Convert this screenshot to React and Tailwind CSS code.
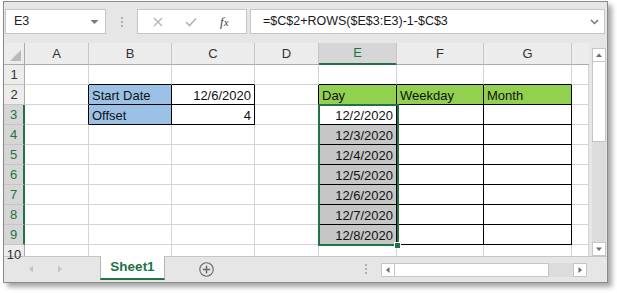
import React from "react";

const COLS = ["A", "B", "C", "D", "E", "F", "G", ""];
const ROWS = [1, 2, 3, 4, 5, 6, 7, 8, 9, 10];

const DATA = {
  B2: { v: "Start Date", bg: "bg-[#9bc2e6]" },
  C2: { v: "12/6/2020", right: true },
  B3: { v: "Offset", bg: "bg-[#9bc2e6]" },
  C3: { v: "4", right: true },
  E2: { v: "Day", bg: "bg-[#92d050]" },
  F2: { v: "Weekday", bg: "bg-[#92d050]" },
  G2: { v: "Month", bg: "bg-[#92d050]" },
  E3: { v: "12/2/2020", right: true },
  E4: { v: "12/3/2020", right: true, bg: "bg-[#c6c6c6]" },
  E5: { v: "12/4/2020", right: true, bg: "bg-[#c6c6c6]" },
  E6: { v: "12/5/2020", right: true, bg: "bg-[#c6c6c6]" },
  E7: { v: "12/6/2020", right: true, bg: "bg-[#c6c6c6]" },
  E8: { v: "12/7/2020", right: true, bg: "bg-[#c6c6c6]" },
  E9: { v: "12/8/2020", right: true, bg: "bg-[#c6c6c6]" },
};

// cells that carry a thin black outline
const inTable = (c, r) =>
  (c >= 1 && c <= 2 && r >= 2 && r <= 3) || (c >= 4 && c <= 6 && r >= 2 && r <= 9);

const Cell = ({ c, r }) => {
  const key = COLS[c] + r;
  const d = DATA[key] || {};
  const rightBlack = inTable(c, r) || inTable(c + 1, r);
  const bottomBlack = inTable(c, r) || inTable(c, r + 1);
  return (
    <div
      className={`flex items-end overflow-hidden px-[3px] pb-[1px] border-r ${
        r === 10 ? "" : "border-b"
      } ${rightBlack ? "border-r-black" : "border-r-[#d4d4d4]"} ${
        bottomBlack ? "border-b-black" : "border-b-[#d4d4d4]"
      } ${d.bg || "bg-white"} ${d.right ? "justify-end" : "justify-start"}`}
    >
      <span className="text-[13px] leading-[15px] text-[#111] whitespace-nowrap">{d.v}</span>
    </div>
  );
};

const ArrowBox = ({ dir }) => (
  <div className="w-[14px] h-[14px] border border-[#c6c6c6] bg-white flex items-center justify-center">
    <svg width="8" height="8" viewBox="0 0 8 8">
      {dir === "up" && <path d="M1 6 L4 2.5 L7 6 Z" fill="#6b6b6b" />}
      {dir === "down" && <path d="M1 2.5 L4 6 L7 2.5 Z" fill="#6b6b6b" />}
      {dir === "left" && <path d="M5.5 1 L2 4 L5.5 7 Z" fill="#6b6b6b" />}
      {dir === "right" && <path d="M2.5 1 L6 4 L2.5 7 Z" fill="#6b6b6b" />}
    </svg>
  </div>
);

export default function App() {
  const font = { fontFamily: '"Liberation Sans", Arial, sans-serif' };
  return (
    <div className="w-[617px] h-[293px] bg-white overflow-hidden" style={font}>
      <div className="ml-[3px] mt-[1px] w-[605px] h-[282px] border border-[#8a8a8a] bg-[#e6e6e6] flex flex-col shadow-[4px_4px_5px_rgba(0,0,0,0.35)]">
        {/* formula bar */}
        <div className="h-[41px] flex items-start pt-[7px] shrink-0">
          <div className="ml-[1px] w-[101px] h-[25px] bg-white border border-[#c6c6c6] flex items-center justify-between pl-[8px] pr-[6px]">
            <span className="text-[12.5px] text-[#222]">E3</span>
            <svg width="9" height="6" viewBox="0 0 9 6">
              <path d="M0.5 1 L8.5 1 L4.5 5 Z" fill="#7a7a7a" />
            </svg>
          </div>
          <div className="w-[31px] h-[25px] flex flex-col items-center justify-center gap-[2px]">
            <span className="w-[2px] h-[2px] bg-[#b0b0b0]" />
            <span className="w-[2px] h-[2px] bg-[#b0b0b0]" />
            <span className="w-[2px] h-[2px] bg-[#b0b0b0]" />
          </div>
          <div className="w-[110px] h-[25px] bg-white border border-[#c6c6c6] flex items-center">
            <svg className="ml-[15px]" width="10" height="10" viewBox="0 0 10 10">
              <path d="M1 1 L9 9 M9 1 L1 9" stroke="#b3b3b3" strokeWidth="1.3" />
            </svg>
            <svg className="ml-[22px]" width="12" height="10" viewBox="0 0 12 10">
              <path d="M1 5 L4.5 8.5 L11 1.5" stroke="#b3b3b3" strokeWidth="1.6" fill="none" />
            </svg>
            <span
              className="ml-[23px] text-[13px] italic text-[#444]"
              style={{ fontFamily: '"Liberation Serif", "Times New Roman", serif' }}
            >
              f<span className="text-[11px]">x</span>
            </span>
          </div>
          <div className="ml-[3px] w-[355px] h-[25px] bg-white border border-[#c6c6c6] flex items-center justify-between pl-[12px] pr-[5px]">
            <span className="text-[12.5px] text-[#1a1a1a]">=$C$2+ROWS($E$3:E3)-1-$C$3</span>
            <svg width="9" height="6" viewBox="0 0 9 6">
              <path d="M1 1 L4.5 4.5 L8 1" stroke="#777" strokeWidth="1.5" fill="none" />
            </svg>
          </div>
        </div>

        {/* sheet */}
        <div className="h-[213px] flex shrink-0">
          <div className="relative w-[585px] bg-white">
            <div className="grid grid-cols-[21px_64px_83px_83px_64px_78px_87px_88px_17px] grid-rows-[22px_repeat(9,20px)_11px]">
              {/* column headers */}
              <div className="bg-[#ececec] border-b border-r border-[#ababab] flex items-end justify-end p-[3px]">
                <svg width="11" height="11" viewBox="0 0 11 11">
                  <path d="M11 0 L11 11 L0 11 Z" fill="#b9b9b9" />
                </svg>
              </div>
              {COLS.map((c, i) => (
                <div
                  key={"h" + i}
                  className={`flex items-center justify-center text-[13px] ${
                    c === "E"
                      ? "bg-[#d6d6d6] text-[#217346] border-b-2 border-b-[#217346]"
                      : "bg-[#ececec] text-[#333] border-b border-b-[#ababab]"
                  } ${i < 7 ? "border-r border-r-[#c6c6c6]" : ""}`}
                >
                  {c}
                </div>
              ))}
              {ROWS.map((r) => (
                <React.Fragment key={r}>
                  <div
                    className={`flex justify-center text-[13px] leading-[20px] ${
                      r >= 3 && r <= 9
                        ? "bg-[#d6d6d6] text-[#217346] border-r-2 border-r-[#217346]"
                        : "bg-[#ececec] text-[#333] border-r border-r-[#ababab]"
                    } ${r === 10 ? "" : "border-b border-b-[#c6c6c6]"}`}
                  >
                    {r}
                  </div>
                  {COLS.map((c, i) => (
                    <Cell key={c + i} c={i} r={r} />
                  ))}
                </React.Fragment>
              ))}
            </div>
            {/* selection E3:E9 */}
            <div className="absolute left-[314px] top-[61px] w-[81px] h-[142px] border-2 border-[#217346] pointer-events-none" />
            <div className="absolute left-[390px] top-[199px] w-[7px] h-[7px] bg-[#217346] border border-white" />
          </div>
          {/* vertical scrollbar */}
          <div className="ml-[3px] w-[14px] pt-[5px] flex flex-col">
            <ArrowBox dir="up" />
            <div className="h-[80px] bg-white border-x border-b border-[#c6c6c6]" />
            <div className="flex-1 bg-[#dcdcdc]" />
            <ArrowBox dir="down" />
          </div>
        </div>

        {/* sheet tabs */}
        <div className="h-[25px] flex border-t border-[#c6c6c6] shrink-0">
          <div className="w-[96px] flex items-center">
            <svg className="ml-[24px]" width="6" height="8" viewBox="0 0 6 8">
              <path d="M5 0.5 L1 4 L5 7.5 Z" fill="#c4c4c4" />
            </svg>
            <svg className="ml-[23px]" width="6" height="8" viewBox="0 0 6 8">
              <path d="M1 0.5 L5 4 L1 7.5 Z" fill="#c4c4c4" />
            </svg>
          </div>
          <div className="-mt-px w-[65px] h-[24px] bg-white border-x border-[#b5b5b5] border-b-2 border-b-[#217346] flex items-center justify-center">
            <span className="text-[13.5px] font-bold text-[#217346]">Sheet1</span>
          </div>
          <div className="ml-[34px] flex items-center">
            <svg width="15" height="15" viewBox="0 0 15 15">
              <circle cx="7.5" cy="7.5" r="6.7" fill="none" stroke="#6a6a6a" strokeWidth="1.1" />
              <path d="M7.5 3.8 V11.2 M3.8 7.5 H11.2" stroke="#6a6a6a" strokeWidth="1.5" />
            </svg>
          </div>
          <div className="ml-[151px] flex flex-col justify-center gap-[2px]">
            <span className="w-[2px] h-[2px] bg-[#b0b0b0]" />
            <span className="w-[2px] h-[2px] bg-[#b0b0b0]" />
            <span className="w-[2px] h-[2px] bg-[#b0b0b0]" />
          </div>
          <div className="ml-[14px] mt-[6px] h-[15px] flex">
            <ArrowBox dir="left" />
            <div className="w-[154px] h-[14px] bg-white border-y border-r border-[#c6c6c6]" />
            <div className="w-[24px] h-[14px] bg-[#dcdcdc]" />
            <ArrowBox dir="right" />
          </div>
        </div>
      </div>
    </div>
  );
}
